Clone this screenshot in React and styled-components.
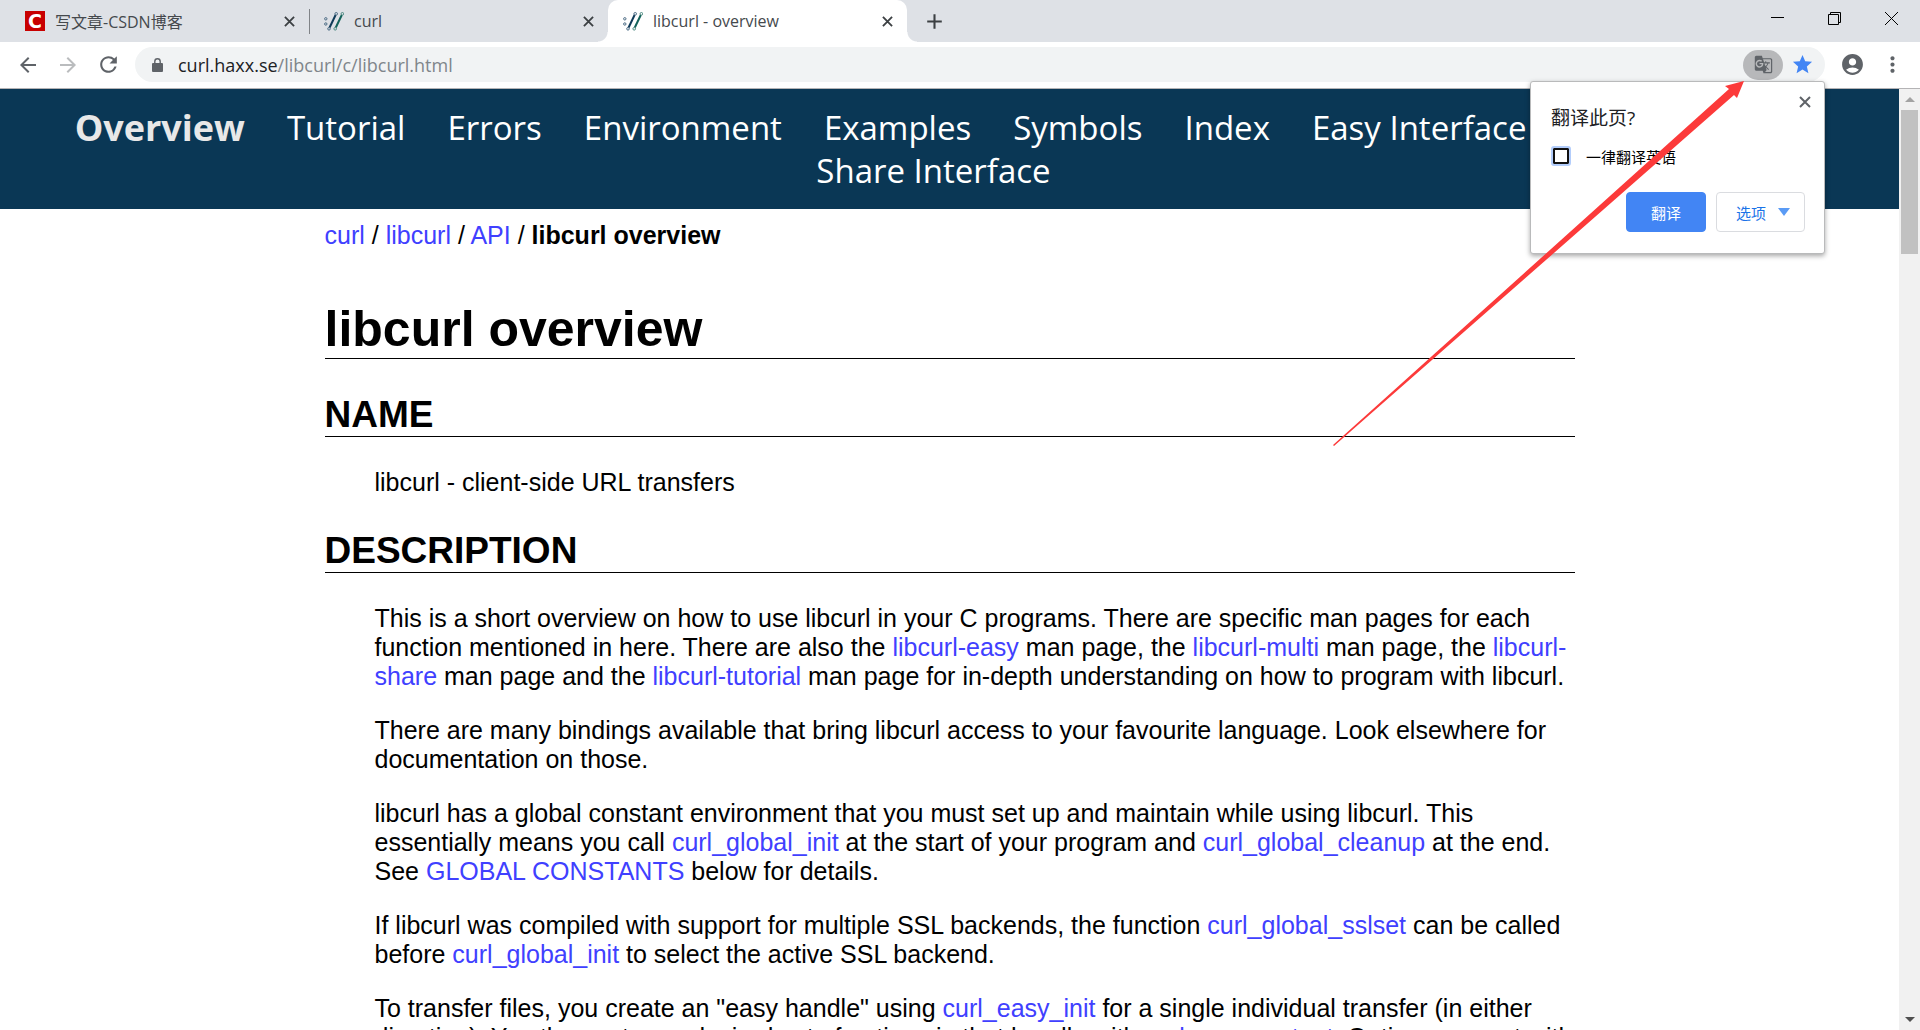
import { useState } from 'react';
import { styled, createGlobalStyle, css } from 'styled-components';
import {
  MdAccountCircle,
  MdAdd,
  MdArrowBack,
  MdArrowForward,
  MdGTranslate,
  MdMoreVert,
  MdRefresh,
  MdStar,
} from 'react-icons/md';

const GlobalStyle = createGlobalStyle`
  *, *::before, *::after {
    box-sizing: border-box;
  }

  body {
    margin: 0;
    background: #fff;
  }

  button {
    padding: 0;
    border: 0;
    background: none;
    font: inherit;
    color: inherit;
    cursor: pointer;
  }
`;

const uiFont = css`
  font-family: 'Open Sans', 'Noto Sans CJK SC', sans-serif;
`;

const Window = styled.div`
  ${uiFont}
  position: relative;
  display: flex;
  flex-direction: column;
  height: 100vh;
  overflow: hidden;
`;

/* ---- tab strip ---- */

const TabStrip = styled.div`
  display: flex;
  height: 42px;
  padding-left: 10px;
  background: #dee1e6;
`;

const Tab = styled.div`
  position: relative;
  display: flex;
  align-items: center;
  gap: 10px;
  width: 299px;
  padding: 0 14px 0 15px;
  font-size: 16px;
  color: #45494d;

  ${({ $divided }) =>
    $divided &&
    css`
      &::before {
        content: '';
        position: absolute;
        left: 0;
        top: 9px;
        width: 1px;
        height: 25px;
        background: #808387;
      }
    `}

  ${({ $active }) =>
    $active &&
    css`
      background: #fff;
      border-radius: 10px 10px 0 0;

      &::before,
      &::after {
        content: '';
        position: absolute;
        bottom: 0;
        width: 10px;
        height: 10px;
      }

      &::before {
        right: 100%;
        background: radial-gradient(circle at 0 0, transparent 9px, #fff 10px);
      }

      &::after {
        left: 100%;
        background: radial-gradient(circle at 100% 0, transparent 9px, #fff 10px);
      }
    `}
`;

const TabTitle = styled.span`
  flex: 1;
  white-space: nowrap;
`;

const TabButton = styled.button`
  display: flex;
  color: #3c4043;
`;

const NewTabButton = styled.button`
  display: flex;
  align-items: center;
  margin-left: 15px;
  color: #3c4043;
`;

const CsdnIcon = styled.span`
  width: 20px;
  height: 20px;
  background: #c80000;
  color: #fff;
  font: bold 19px/20px 'DejaVu Sans', sans-serif;
  text-align: center;
`;

const WindowControls = styled.div`
  display: flex;
  align-items: flex-start;
  margin-left: auto;
`;

const ControlButton = styled.button`
  display: flex;
  justify-content: center;
  width: 57px;
  padding-top: 12px;
`;

/* ---- toolbar ---- */

const Toolbar = styled.div`
  display: flex;
  align-items: center;
  height: 47px;
  padding: 0 8px 1px;
  background: #fff;
  border-bottom: 1px solid #b4b3b5;
`;

const ToolButton = styled.button`
  display: flex;
  justify-content: center;
  width: 40px;
  color: ${({ $muted }) => ($muted ? '#babcbe' : '#5f6368')};
`;

const Omnibox = styled.div`
  display: flex;
  flex: 1;
  align-items: center;
  gap: 15px;
  height: 35px;
  margin: 0 7px;
  padding: 0 11px 0 17px;
  border-radius: 18px;
  background: #f1f3f4;
  color: #5f6368;
`;

const Address = styled.div`
  flex: 1;
  font-size: 18px;
  line-height: 34px;
  color: #80868b;

  b {
    font-weight: 400;
    color: #202124;
  }
`;

const OmniboxActions = styled.div`
  display: flex;
  align-items: center;
  gap: 8px;
`;

const TranslateButton = styled.button`
  display: flex;
  align-items: center;
  justify-content: center;
  width: 40px;
  height: 30px;
  border-radius: 15px;
  background: #b7b8ba;
`;

const StarButton = styled.button`
  display: flex;
  color: #4285f4;
`;

/* ---- translate bubble ---- */

const Bubble = styled.div`
  position: absolute;
  top: 81px;
  right: 95px;
  width: 295px;
  padding: 21px 19px 21px 20px;
  border: 1px solid #b9babb;
  border-radius: 3px;
  background: #fff;
  box-shadow: 0 2px 5px rgba(0, 0, 0, 0.35);
  color: #202124;
`;

const BubbleHead = styled.div`
  display: flex;
  align-items: center;
  height: 28px;
  font-size: 19px;
`;

const BubbleClose = styled.button`
  position: absolute;
  top: 14px;
  right: 13px;
  display: flex;
  color: #5f6368;
`;

const CheckRow = styled.label`
  display: flex;
  align-items: center;
  gap: 17px;
  height: 22px;
  margin: 14px 0 25px;
  padding-left: 2px;
  font-size: 15px;
  color: #000;

  input {
    appearance: none;
    width: 16px;
    height: 16px;
    margin: 0;
    border: 2px solid #111;
    border-radius: 1px;
    outline: 2px solid #b3cdfb;
    background: #fff;
  }

  input:checked {
    background: #4285f4;
  }
`;

const BubbleActions = styled.div`
  display: flex;
  justify-content: flex-end;
  gap: 10px;
`;

const ActionButton = styled.button`
  display: flex;
  align-items: center;
  justify-content: center;
  gap: 12px;
  height: 40px;
  border-radius: 4px;
  font-size: 15px;

  && {
    padding: ${({ $primary }) => ($primary ? '0 24px' : '0 14px 0 19px')};
    border: 1px solid ${({ $primary }) => ($primary ? '#4285f4' : '#dadce0')};
    background: ${({ $primary }) => ($primary ? '#4285f4' : '#fff')};
    color: ${({ $primary }) => ($primary ? '#fff' : '#1a73e8')};
  }
`;

const PointerArrow = styled.svg`
  position: absolute;
  top: 81px;
  right: 175px;
  pointer-events: none;
`;

/* ---- page ---- */

const Viewport = styled.div`
  display: flex;
  flex: 1;
  min-height: 0;
`;

const Page = styled.div`
  flex: 1;
  overflow: hidden;
  background: #fff;
  font-family: 'Liberation Sans', Arial, sans-serif;
  font-size: 25px;
  line-height: 29px;
  color: #000;
`;

const SiteNav = styled.nav`
  ${uiFont}
  display: flex;
  flex-wrap: wrap;
  justify-content: center;
  column-gap: 42px;
  padding: 17px 32px 17px 0;
  background: #0a3755;
  font-size: 33px;
  line-height: 43px;
`;

const NavLink = styled.a`
  color: #fff;
  text-decoration: none;

  ${({ $current }) =>
    $current &&
    css`
      color: #e8e8e8;
      font-size: 36px;
      font-weight: 700;
    `}
`;

const Article = styled.main`
  max-width: 1250px;
  margin: 0 auto;
  padding-top: 12px;

  a {
    color: #4040ff;
    text-decoration: none;
  }
`;

const Title = styled.h1`
  margin: 51px 0 34px;
  border-bottom: 1px solid #000;
  font-size: 50px;
  line-height: 57px;
`;

const Heading = styled.h2`
  margin: 32px 0 31px;
  border-bottom: 1px solid #000;
  font-size: 37px;
  line-height: 43px;
`;

const Text = styled.p`
  margin: 25px 0;
  padding-left: 50px;
`;

const ScrollBar = styled.div`
  display: flex;
  flex-direction: column;
  align-items: center;
  width: 21px;
  background: #f1f1f1;
`;

const ScrollArrow = styled.span`
  height: 21px;
  display: flex;
  align-items: center;
  color: ${({ $disabled }) => ($disabled ? '#a3a3a3' : '#505050')};
`;

const ScrollTrack = styled.div`
  flex: 1;
  width: 17px;
`;

const ScrollThumb = styled.div`
  height: 16%;
  background: #c1c1c1;
`;

const navLinks = [
  'Overview',
  'Tutorial',
  'Errors',
  'Environment',
  'Examples',
  'Symbols',
  'Index',
  'Easy Interface',
  'Multi Interface',
  'Share Interface',
];

function CurlIcon() {
  return (
    <svg width="20" height="20" viewBox="0 0 20 20" fill="none">
      <g stroke="#4b6b84" strokeWidth="1">
        <circle cx="1.8" cy="7.8" r="1.2" />
        <circle cx="1.8" cy="13" r="1.2" />
      </g>
      <path d="M5.6 16.5L11.6 4" stroke="#0f3a58" strokeWidth="2" />
      <circle cx="12.2" cy="2.8" r="1.3" stroke="#4b6b84" />
      <circle cx="5" cy="17.8" r="1.3" stroke="#4b6b84" />
      <path d="M11.8 16.5L17.8 4" stroke="#12625a" strokeWidth="2" />
      <circle cx="18.4" cy="2.8" r="1.3" stroke="#4d8a82" />
      <circle cx="11.2" cy="17.8" r="1.3" stroke="#4d8a82" />
    </svg>
  );
}

function LockIcon() {
  return (
    <svg width="11" height="14" viewBox="0 0 11 14" fill="none">
      <rect y="5" width="11" height="9" rx="1" fill="currentColor" />
      <path d="M2.8 6V3.4A2.7 2.7 0 0 1 8.2 3.4V6" stroke="currentColor" strokeWidth="1.4" />
    </svg>
  );
}

function CloseIcon({ size }) {
  return (
    <svg width={size} height={size} viewBox="0 0 12 12" stroke="currentColor" strokeWidth="2">
      <path d="M1 1L11 11M11 1L1 11" />
    </svg>
  );
}

function BrowserTab({ icon, title, active, divided }) {
  return (
    <Tab $active={active} $divided={divided}>
      {icon}
      <TabTitle>{title}</TabTitle>
      <TabButton type="button" aria-label="Close tab">
        <CloseIcon size={11} />
      </TabButton>
    </Tab>
  );
}

function TranslateBubble({ onClose }) {
  const [always, setAlways] = useState(false);

  return (
    <Bubble role="dialog">
      <BubbleHead>翻译此页?</BubbleHead>
      <BubbleClose type="button" aria-label="Close" onClick={onClose}>
        <CloseIcon size={12} />
      </BubbleClose>
      <CheckRow>
        <input type="checkbox" checked={always} onChange={(event) => setAlways(event.target.checked)} />
        一律翻译英语
      </CheckRow>
      <BubbleActions>
        <ActionButton type="button" $primary>翻译</ActionButton>
        <ActionButton type="button">
          选项
          <svg width="12" height="8" viewBox="0 0 12 8">
            <path d="M0 0H12L6 8Z" fill="#5a9bf5" />
          </svg>
        </ActionButton>
      </BubbleActions>
    </Bubble>
  );
}

export default function App() {
  const [showBubble, setShowBubble] = useState(true);

  return (
    <Window>
      <GlobalStyle />
      <TabStrip>
        <BrowserTab icon={<CsdnIcon>C</CsdnIcon>} title="写文章-CSDN博客" />
        <BrowserTab icon={<CurlIcon />} title="curl" divided />
        <BrowserTab icon={<CurlIcon />} title="libcurl - overview" active />
        <NewTabButton type="button" aria-label="New tab">
          <MdAdd size={25} />
        </NewTabButton>
        <WindowControls>
          <ControlButton type="button" aria-label="Minimize">
            <svg width="13" height="13" viewBox="0 0 13 13" stroke="#000">
              <path d="M0 5.5H13" />
            </svg>
          </ControlButton>
          <ControlButton type="button" aria-label="Restore">
            <svg width="13" height="13" viewBox="0 0 13 13" fill="none" stroke="#000">
              <path d="M0.5 2.5H10.5V12.5H0.5ZM2.5 2.5V0.5H12.5V10.5H10.5" />
            </svg>
          </ControlButton>
          <ControlButton type="button" aria-label="Close">
            <svg width="13" height="13" viewBox="0 0 13 13" stroke="#000">
              <path d="M0 0L13 13M13 0L0 13" />
            </svg>
          </ControlButton>
        </WindowControls>
      </TabStrip>

      <Toolbar>
        <ToolButton type="button" aria-label="Back"><MdArrowBack size={24} /></ToolButton>
        <ToolButton type="button" aria-label="Forward" $muted><MdArrowForward size={24} /></ToolButton>
        <ToolButton type="button" aria-label="Reload"><MdRefresh size={25} /></ToolButton>
        <Omnibox>
          <LockIcon />
          <Address><b>curl.haxx.se</b>/libcurl/c/libcurl.html</Address>
          <OmniboxActions>
            <TranslateButton type="button" aria-label="Translate" onClick={() => setShowBubble(true)}>
              <MdGTranslate size={19} />
            </TranslateButton>
            <StarButton type="button" aria-label="Bookmark"><MdStar size={23} /></StarButton>
          </OmniboxActions>
        </Omnibox>
        <ToolButton type="button" aria-label="Profile"><MdAccountCircle size={25} /></ToolButton>
        <ToolButton type="button" aria-label="Menu"><MdMoreVert size={25} /></ToolButton>
      </Toolbar>

      <Viewport>
        <Page>
          <SiteNav>
            {navLinks.map((name) => (
              <NavLink key={name} href="#" $current={name === 'Overview'}>{name}</NavLink>
            ))}
          </SiteNav>
          <Article>
            <div>
              <a href="#">curl</a> / <a href="#">libcurl</a> / <a href="#">API</a> / <b>libcurl overview</b>
            </div>
            <Title>libcurl overview</Title>
            <Heading>NAME</Heading>
            <Text>libcurl - client-side URL transfers</Text>
            <Heading>DESCRIPTION</Heading>
            <Text>
              This is a short overview on how to use libcurl in your C programs. There are specific man
              pages for each function mentioned in here. There are also the <a href="#">libcurl-easy</a> man
              page, the <a href="#">libcurl-multi</a> man page, the <a href="#">libcurl-share</a> man page
              and the <a href="#">libcurl-tutorial</a> man page for in-depth understanding on how to program
              with libcurl.
            </Text>
            <Text>
              There are many bindings available that bring libcurl access to your favourite language. Look
              elsewhere for documentation on those.
            </Text>
            <Text>
              libcurl has a global constant environment that you must set up and maintain while using
              libcurl. This essentially means you call <a href="#">curl_global_init</a> at the start of your
              program and <a href="#">curl_global_cleanup</a> at the end. See <a href="#">GLOBAL
              CONSTANTS</a> below for details.
            </Text>
            <Text>
              If libcurl was compiled with support for multiple SSL backends, the
              function <a href="#">curl_global_sslset</a> can be called
              before <a href="#">curl_global_init</a> to select the active SSL backend.
            </Text>
            <Text>
              To transfer files, you create an "easy handle" using <a href="#">curl_easy_init</a> for a
              single individual transfer (in either direction). You then set your desired set of options in
              that handle with <a href="#">curl_easy_setopt</a>. Options you set with
            </Text>
          </Article>
        </Page>
        <ScrollBar>
          <ScrollArrow $disabled>
            <svg width="10" height="5" viewBox="0 0 10 5"><path d="M0 5L5 0L10 5Z" fill="currentColor" /></svg>
          </ScrollArrow>
          <ScrollTrack>
            <ScrollThumb />
          </ScrollTrack>
          <ScrollArrow>
            <svg width="10" height="5" viewBox="0 0 10 5"><path d="M0 0L5 5L10 0Z" fill="currentColor" /></svg>
          </ScrollArrow>
        </ScrollBar>
      </Viewport>

      {showBubble && <TranslateBubble onClose={() => setShowBubble(false)} />}
      <PointerArrow width="412" height="366" viewBox="0 0 412 366">
        <path d="M0 364L396 8L392 5L411 0L404 17L401 14L1 365Z" fill="#fc3a3a" />
      </PointerArrow>
    </Window>
  );
}
